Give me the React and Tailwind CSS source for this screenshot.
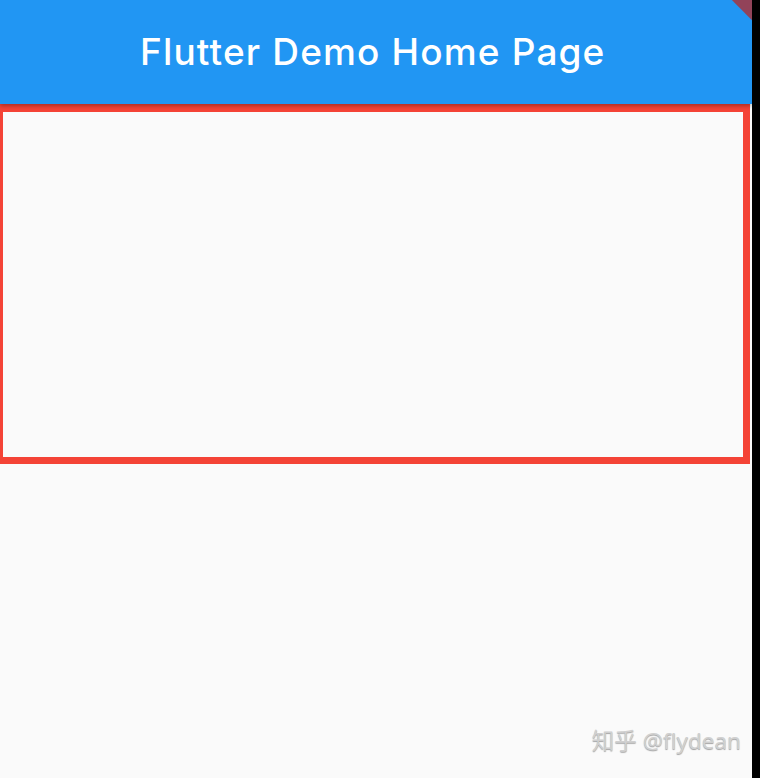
import React from "react";

export default function App() {
  return (
    <div className="flex h-[778px] w-[760px] overflow-hidden bg-black">
      <div className="relative flex w-[752px] flex-col bg-[#fafafa]">
        <div className="relative z-10 flex h-[104px] items-center overflow-hidden bg-[#2196f3] pb-[2px] pl-[140px] shadow-[0_2px_4px_rgba(0,0,0,0.3)]">
          <span
            className="text-[37px] font-medium leading-none tracking-[1.15px] text-white"
            style={{ fontFamily: "Inter, 'Noto Sans', sans-serif" }}
          >
            Flutter Demo Home Page
          </span>
          <div className="absolute right-[-30px] top-[-14px] h-[20px] w-[80px] rotate-45 bg-[#9e3a48]/90" />
        </div>
        <div className="h-[360px] w-[750px] border-[7px] border-t-[8px] border-l-[3px] border-[#f44336]" />
        <div className="flex-1" />
        <div
          className="absolute bottom-[20px] right-[11px] text-[22.5px] text-[#d0d0d0] [text-shadow:0_1px_1px_rgba(0,0,0,0.35)]"
          style={{ fontFamily: "'Noto Sans', 'Noto Sans CJK SC', sans-serif" }}
        >
          知乎 @flydean
        </div>
      </div>
      <div className="flex-1 bg-black" />
    </div>
  );
}
